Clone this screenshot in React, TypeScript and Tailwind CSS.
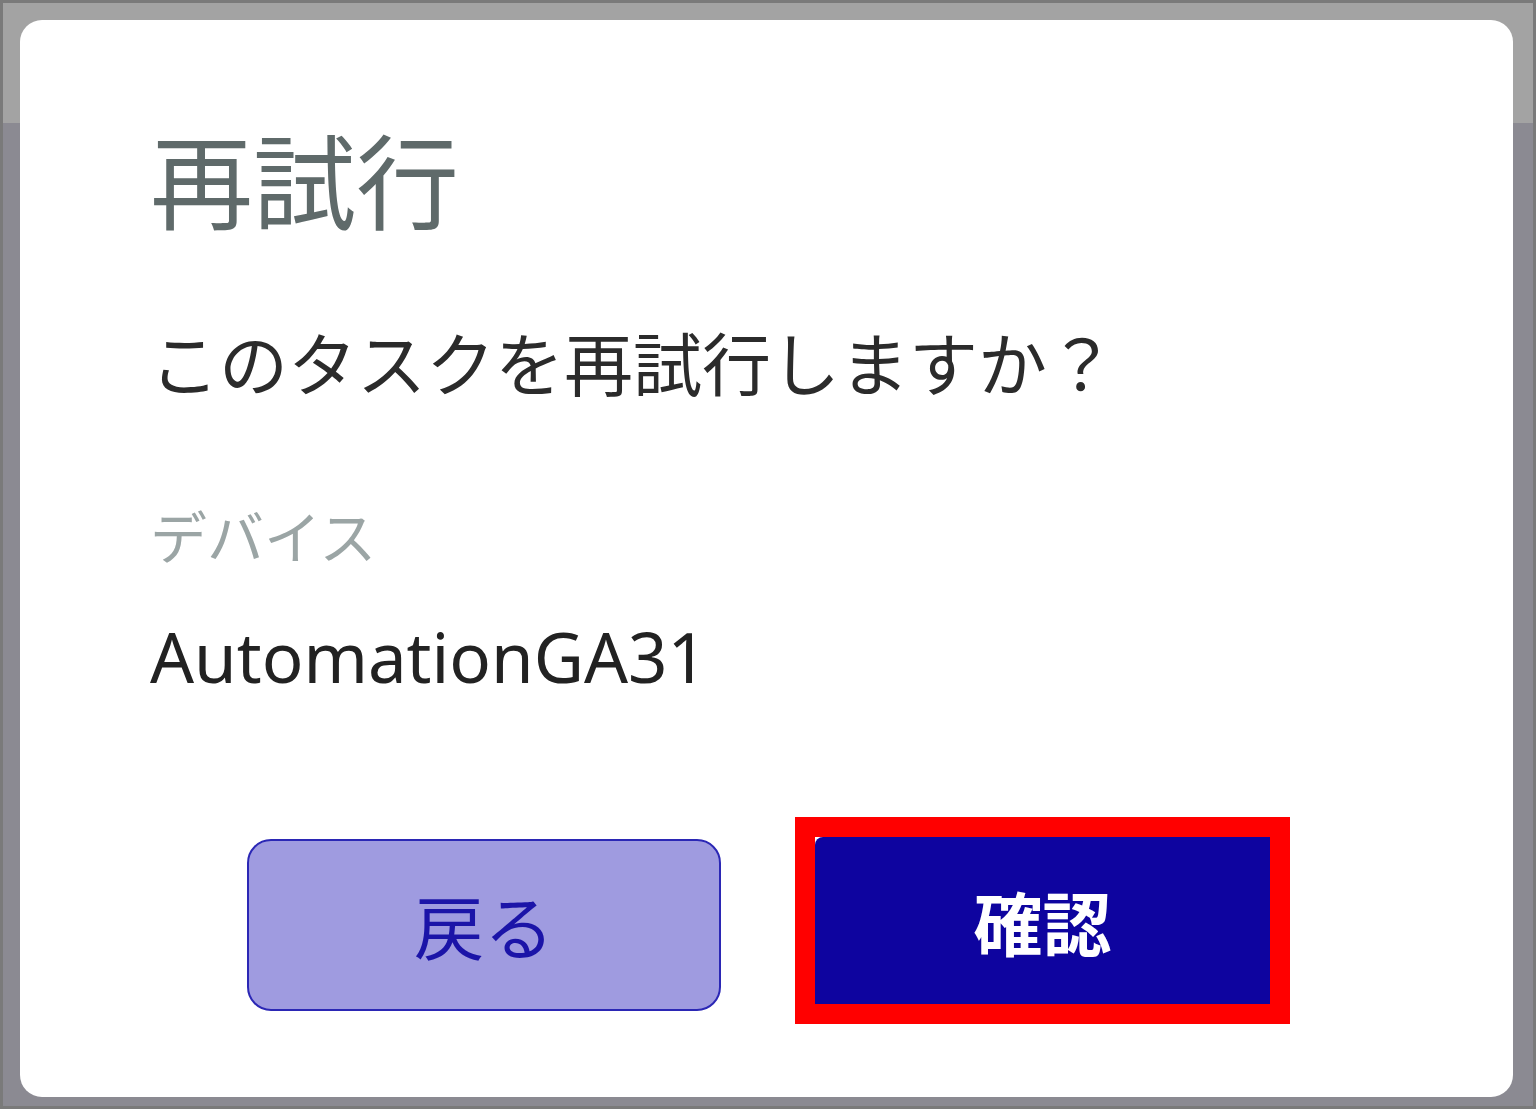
const jp = "font-['Noto_Sans_CJK_JP','Noto_Sans',sans-serif]";

export default function App() {
  return (
    <div className="w-[1536px] h-[1109px] border-[3px] border-[#7a7a7a] bg-[linear-gradient(#a3a3a3_0_120px,#8b8a92_120px)] pt-[17px] pl-[17px]">
      <div className={`w-[1493px] h-[1077px] rounded-[22px] bg-white pl-[130px] pt-[106px] ${jp}`}>
        <h1 className="text-[103px] leading-none font-normal text-[#5f6a6a]">再試行</h1>
        <p className="mt-[98px] text-[69px] leading-none text-[#2b2b2b]">このタスクを再試行しますか？</p>
        <div className="mt-[110px] text-[57px] leading-none text-[#9ba5a5]">デバイス</div>
        <div className="mt-[59px] text-[69px] leading-none text-[#222] font-['Noto_Sans','Noto_Sans_CJK_JP',sans-serif]">
          AutomationGA31
        </div>
        <div className="mt-[126px] ml-[97px] flex items-start gap-[74px]">
          <button className="mt-[22px] w-[474px] h-[172px] rounded-[24px] border-2 border-[#2b27b5] bg-[#9f9be0] text-[70px] leading-none text-[#1b14a8] flex items-center justify-center">
            戻る
          </button>
          <div className="w-[495px] h-[207px] border-[20px] border-[#ff0000] bg-white">
            <button className="w-full h-full rounded-tl-[8px] bg-[#0e049f] pt-[2px] text-[69px] leading-none font-semibold text-white flex items-center justify-center">
              確認
            </button>
          </div>
        </div>
      </div>
    </div>
  );
}
